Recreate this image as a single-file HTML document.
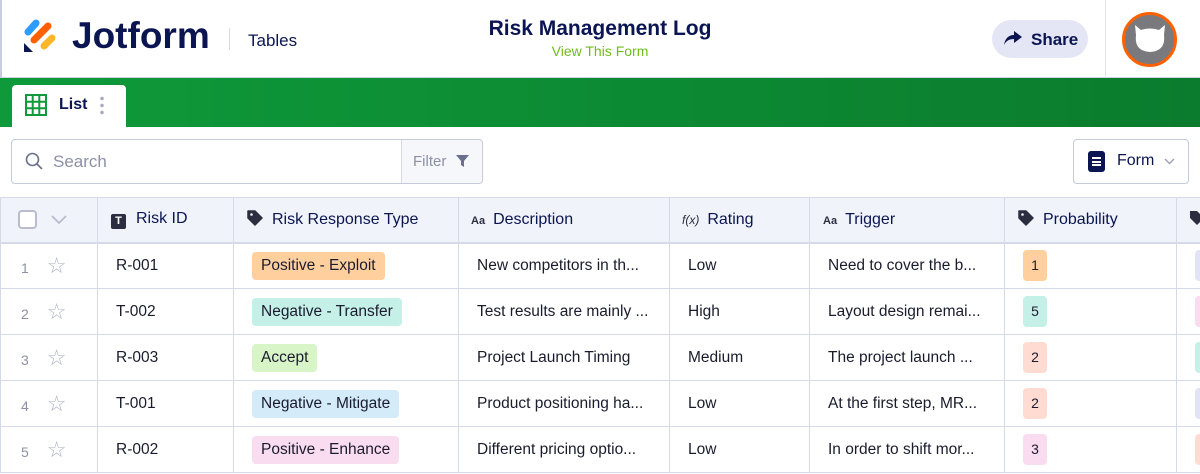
<!DOCTYPE html>
<html><head><meta charset="utf-8"><style>
*{box-sizing:border-box;margin:0;padding:0}
body{width:1200px;height:474px;overflow:hidden;background:#fff;font-family:"Liberation Sans",sans-serif;color:#0a1551;position:relative}
.hdr{position:absolute;left:0;top:0;width:1200px;height:78px;border-left:2px solid #c8cbe0;border-bottom:1px solid #d0d3e6}
.green{position:absolute;left:0;top:78px;width:1200px;height:49px;background:linear-gradient(90deg,#0e9a3a,#0b7c2d)}
.tab{position:absolute;left:12px;top:85px;width:114px;height:42px;background:#fff;border-radius:4px 4px 0 0}
.abs{position:absolute}
table{position:absolute;left:0;top:197px;border-collapse:collapse;table-layout:fixed;width:1230px}
td,th{border:1px solid #d6d9e8;height:46px;font-size:15.5px;white-space:nowrap;overflow:hidden;text-align:left;font-weight:normal;color:#1b1b2e;vertical-align:middle}
th{background:#f1f3fb;color:#0a1551;height:45px;border-bottom:2px solid #d6d9e8;font-size:16px}
.pill{display:inline-block;padding:5px 9px;border-radius:4px;color:#1b1b2e}
.num{display:inline-block;width:24px;height:31px;line-height:31px;text-align:center;border-radius:4px;font-size:14px;vertical-align:middle}
.ic{vertical-align:-2px;margin-right:9px}
</style></head><body>
<div class="hdr"></div>
<svg class="abs" style="left:22px;top:18px" width="36" height="36" viewBox="0 0 36 36">
<line x1="6" y1="14" x2="14" y2="5" stroke="#2d9cff" stroke-width="7" stroke-linecap="round"/>
<line x1="12" y1="22" x2="26" y2="8" stroke="#ff6100" stroke-width="7" stroke-linecap="round"/>
<line x1="22" y1="28" x2="30" y2="20" stroke="#ffb629" stroke-width="7" stroke-linecap="round"/>
<path d="M2 25 L2 34 L11 34 Z" fill="#0a1551"/></svg>
<div class="abs" style="left:72px;top:15px;font-size:37px;font-weight:bold;color:#0a1551">Jotform</div>
<div class="abs" style="left:229px;top:28px;width:1px;height:22px;background:#d8dae8"></div>
<div class="abs" style="left:248px;top:31px;font-size:17px;color:#0a1551">Tables</div>
<div class="abs" style="left:400px;top:17px;width:400px;text-align:center;font-size:21px;font-weight:bold;color:#0a1551">Risk Management Log</div>
<div class="abs" style="left:400px;top:43px;width:400px;text-align:center;font-size:14px;color:#6fbc1c">View This Form</div>
<div class="abs" style="left:992px;top:20px;width:96px;height:38px;border-radius:19px;background:#e5e6f5"></div>
<svg class="abs" style="left:1004px;top:31px" width="18" height="15" viewBox="0 0 18 15"><path d="M10 0 L18 6 L10 12 L10 8 C5 8 2 10 0 14 C1 8 4 4 10 4Z" fill="#0a1551"/></svg>
<div class="abs" style="left:1031px;top:30px;font-size:17px;font-weight:bold;color:#0a1551">Share</div>
<div class="abs" style="left:1105px;top:0;width:1px;height:78px;background:#e0e2ee"></div>
<div class="abs" style="left:1122px;top:12px;width:55px;height:55px;border-radius:50%;background:#7a7a7e;border:3px solid #ff6100"></div>
<svg class="abs" style="left:1132px;top:23px" width="36" height="32" viewBox="0 0 36 32"><path d="M3 2 L9 7 Q18 4 27 7 L33 2 L32 12 Q34 28 18 29 Q2 28 4 12Z" fill="#fff"/></svg>
<div class="green"></div>
<div class="tab"></div>
<svg class="abs" style="left:25px;top:94px" width="22" height="22" viewBox="0 0 22 22"><rect x="1" y="1" width="20" height="20" fill="none" stroke="#12993b" stroke-width="2"/><path d="M1 7.7H21M1 14.3H21M7.7 1V21M14.3 1V21" stroke="#12993b" stroke-width="2"/></svg>
<div class="abs" style="left:59px;top:96px;font-size:16px;font-weight:bold;color:#0a1551">List</div>
<div class="abs" style="left:100px;top:95px;width:4px;height:20px;background:radial-gradient(circle,#a8abc4 1.6px,transparent 2px) 0 0/4px 7px"></div>
<div class="abs" style="left:11px;top:139px;width:472px;height:45px;border:1px solid #c7cadb;border-radius:4px"></div>
<div class="abs" style="left:401px;top:140px;width:81px;height:43px;background:#f6f7fb;border-left:1px solid #d6d9e8;border-radius:0 4px 4px 0"></div>
<svg class="abs" style="left:25px;top:152px" width="18" height="18" viewBox="0 0 18 18"><circle cx="7.5" cy="7.5" r="6" fill="none" stroke="#6c7090" stroke-width="1.6"/><path d="M12 12L17 17" stroke="#6c7090" stroke-width="1.6"/></svg>
<div class="abs" style="left:53px;top:152px;font-size:17px;color:#8d90a8">Search</div>
<div class="abs" style="left:413px;top:153px;font-size:15px;color:#8d90a8">Filter</div>
<svg class="abs" style="left:456px;top:155px" width="13" height="12" viewBox="0 0 13 12"><path d="M0 0H13L8 6V12L5 10V6Z" fill="#6c7090"/></svg>
<div class="abs" style="left:1073px;top:139px;width:116px;height:45px;border:1px solid #c7cadb;border-radius:4px"></div>
<div class="abs" style="left:1088px;top:151px;width:17px;height:21px;background:#0a1551;border-radius:3px"></div>
<div class="abs" style="left:1092px;top:157px;width:9px;height:9px;border-top:2px solid #fff;border-bottom:2px solid #fff"></div><div class="abs" style="left:1092px;top:161px;width:9px;height:2px;background:#fff"></div>
<div class="abs" style="left:1117px;top:152px;font-size:16px;color:#0a1551">Form</div>
<svg class="abs" style="left:1164px;top:158px" width="11" height="7" viewBox="0 0 11 7"><path d="M1 1L5.5 5.5L10 1" fill="none" stroke="#a0a3ba" stroke-width="1.5"/></svg>
<table>
<colgroup><col style="width:97px"><col style="width:136px"><col style="width:225px"><col style="width:211px"><col style="width:140px"><col style="width:195px"><col style="width:172px"><col style="width:54px"></colgroup>
<tr>
<th><span style="display:inline-block;width:19px;height:19px;border:2px solid #b9bccf;border-radius:4px;margin-left:17px;vertical-align:middle;background:#fff"></span><svg style="margin-left:14px;vertical-align:middle" width="16" height="10" viewBox="0 0 16 10"><path d="M1 1L8 8L15 1" fill="none" stroke="#b9bccf" stroke-width="1.8"/></svg></th>
<th style="padding-left:13px"><span style="display:inline-block;width:15px;height:15px;background:#2b2e3f;border-radius:2px;color:#fff;font-size:11px;text-align:center;line-height:15px;font-weight:bold;vertical-align:-1px;margin-right:10px">T</span>Risk ID</th>
<th style="padding-left:13px"><svg class="ic" width="16" height="16" viewBox="0 0 16 16"><path d="M1 1H8L15 8L8 15L1 8Z" fill="#2b2e3f" stroke="#2b2e3f" stroke-linejoin="round" stroke-width="1.5"/><circle cx="4.5" cy="4.5" r="1.3" fill="#f1f3fb"/></svg>Risk Response Type</th>
<th style="padding-left:12px"><b style="font-size:11px;color:#2b2e3f;margin-right:8px">Aa</b>Description</th>
<th style="padding-left:12px"><i style="font-size:12px;color:#2b2e3f;margin-right:8px">f(x)</i>Rating</th>
<th style="padding-left:13px"><b style="font-size:11px;color:#2b2e3f;margin-right:8px">Aa</b>Trigger</th>
<th style="padding-left:13px"><svg class="ic" width="16" height="16" viewBox="0 0 16 16"><path d="M1 1H8L15 8L8 15L1 8Z" fill="#2b2e3f" stroke="#2b2e3f" stroke-linejoin="round" stroke-width="1.5"/><circle cx="4.5" cy="4.5" r="1.3" fill="#f1f3fb"/></svg>Probability</th>
<th style="padding-left:12px"><svg class="ic" width="16" height="16" viewBox="0 0 16 16"><path d="M1 1H8L15 8L8 15L1 8Z" fill="#2b2e3f"/></svg></th>
</tr>
<tr><td style="color:#8d90a8;font-size:14px;padding-left:20px">1<span style="margin-left:18px;font-size:22px;color:#b0b3c8">☆</span></td><td style="padding-left:18px">R-001</td><td style="padding-left:18px"><span class="pill" style="background:#ffcf9d">Positive - Exploit</span></td><td style="padding-left:18px">New competitors in th...</td><td style="padding-left:18px">Low</td><td style="padding-left:18px">Need to cover the b...</td><td style="padding-left:18px"><span class="num" style="background:#ffcf9d">1</span></td><td><span class="num" style="background:#e2e3f5;margin-left:18px"></span></td></tr>
<tr><td style="color:#8d90a8;font-size:14px;padding-left:20px">2<span style="margin-left:18px;font-size:22px;color:#b0b3c8">☆</span></td><td style="padding-left:18px">T-002</td><td style="padding-left:18px"><span class="pill" style="background:#c4f0e8">Negative - Transfer</span></td><td style="padding-left:18px">Test results are mainly ...</td><td style="padding-left:18px">High</td><td style="padding-left:18px">Layout design remai...</td><td style="padding-left:18px"><span class="num" style="background:#c4f0e8">5</span></td><td><span class="num" style="background:#fadcf0;margin-left:18px"></span></td></tr>
<tr><td style="color:#8d90a8;font-size:14px;padding-left:20px">3<span style="margin-left:18px;font-size:22px;color:#b0b3c8">☆</span></td><td style="padding-left:18px">R-003</td><td style="padding-left:18px"><span class="pill" style="background:#d7f5c6">Accept</span></td><td style="padding-left:18px">Project Launch Timing</td><td style="padding-left:18px">Medium</td><td style="padding-left:18px">The project launch ...</td><td style="padding-left:18px"><span class="num" style="background:#ffdbd1">2</span></td><td><span class="num" style="background:#c4f0e8;margin-left:18px"></span></td></tr>
<tr><td style="color:#8d90a8;font-size:14px;padding-left:20px">4<span style="margin-left:18px;font-size:22px;color:#b0b3c8">☆</span></td><td style="padding-left:18px">T-001</td><td style="padding-left:18px"><span class="pill" style="background:#d4ebfa">Negative - Mitigate</span></td><td style="padding-left:18px">Product positioning ha...</td><td style="padding-left:18px">Low</td><td style="padding-left:18px">At the first step, MR...</td><td style="padding-left:18px"><span class="num" style="background:#ffdbd1">2</span></td><td><span class="num" style="background:#e2e3f5;margin-left:18px"></span></td></tr>
<tr><td style="color:#8d90a8;font-size:14px;padding-left:20px">5<span style="margin-left:18px;font-size:22px;color:#b0b3c8">☆</span></td><td style="padding-left:18px">R-002</td><td style="padding-left:18px"><span class="pill" style="background:#fadcf0">Positive - Enhance</span></td><td style="padding-left:18px">Different pricing optio...</td><td style="padding-left:18px">Low</td><td style="padding-left:18px">In order to shift mor...</td><td style="padding-left:18px"><span class="num" style="background:#fadcf0">3</span></td><td><span class="num" style="background:#ffdbd1;margin-left:18px"></span></td></tr>
</table>
</body></html>
